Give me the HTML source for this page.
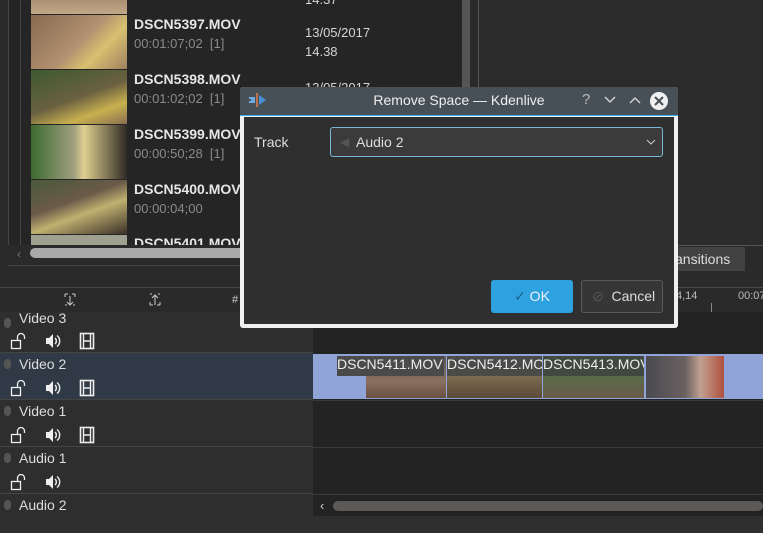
<!DOCTYPE html>
<html><head><style>
*{margin:0;padding:0;box-sizing:border-box}
body{width:763px;height:533px;background:#2a2a2a;font-family:"Liberation Sans",sans-serif;overflow:hidden;position:relative;color:#ddd}
.a{position:absolute}
.th{position:absolute;left:31px;width:96px;height:54px}
.nm{position:absolute;left:134px;font-weight:bold;font-size:14px;color:#e6e6e6}
.tc{position:absolute;left:134px;font-size:13px;color:#8a8a8a}
.dt{position:absolute;left:305px;font-size:13px;color:#d5d5d5}
.trk{position:absolute;left:0;width:313px;border-bottom:1px solid #444}
.trk .t{position:absolute;left:19px;top:3px;font-size:14px;color:#ddd}
.trk .led{position:absolute;left:4px;top:6px;width:7px;height:10px;border-radius:4px;background:#555}
.ic{position:absolute;top:26px}
</style></head><body>
<svg width="0" height="0" style="position:absolute">
<defs>
<symbol id="lk" viewBox="0 0 18 18"><rect x="1.5" y="8.5" width="9" height="8" fill="none" stroke="#eee" stroke-width="1.3"/><path d="M7.5 8.5V5a3.5 3.5 0 0 1 7 0v2" fill="none" stroke="#eee" stroke-width="1.3"/></symbol>
<symbol id="sp" viewBox="0 0 18 18"><path d="M2 6h3l4-4v14l-4-4H2z" fill="#eee"/><path d="M11 6a4 4 0 0 1 0 6M13 3.5a7 7 0 0 1 0 11" fill="none" stroke="#eee" stroke-width="1.4"/></symbol>
<symbol id="fm" viewBox="0 0 18 18"><rect x="2.5" y="1.5" width="13" height="15" fill="none" stroke="#eee" stroke-width="1.6"/><path d="M5.5 1.5v15M12.5 1.5v15M5.5 9h7" stroke="#eee" stroke-width="1.4"/></symbol>
</defs></svg>
<!-- bin panel -->
<div class="a" style="left:8px;top:0;width:462px;height:266px;border:1px solid #444;border-top:none;background:#252525"></div>
<div class="a" style="left:20px;top:0;width:1px;height:245px;background:#444"></div>
<div class="th" style="top:0;height:14px;background:linear-gradient(#a89070,#c0a888)"></div>
<div class="dt" style="top:-8px">14.37</div>
<div class="th" style="top:15px;background:linear-gradient(135deg,#8a6a50,#b09070 50%,#d8c070 70%,#a08060)"></div>
<div class="nm" style="top:16px">DSCN5397.MOV</div><div class="tc" style="top:36px">00:01:07;02&nbsp; [1]</div>
<div class="dt" style="top:25px">13/05/2017</div><div class="dt" style="top:44px">14.38</div>
<div class="th" style="top:70px;background:linear-gradient(160deg,#3d5a30,#6a6040 50%,#c8b050 75%,#8a7050)"></div>
<div class="nm" style="top:71px">DSCN5398.MOV</div><div class="tc" style="top:91px">00:01:02;02&nbsp; [1]</div>
<div class="dt" style="top:80px">13/05/2017</div>
<div class="th" style="top:125px;background:linear-gradient(90deg,#3d6a30,#a0a080 45%,#e0d090 55%,#302a25)"></div>
<div class="nm" style="top:126px">DSCN5399.MOV</div><div class="tc" style="top:146px">00:00:50;28&nbsp; [1]</div>
<div class="th" style="top:180px;background:linear-gradient(160deg,#4a5a3a,#6a5a48 40%,#c0b070 60%,#3a3028)"></div>
<div class="nm" style="top:181px">DSCN5400.MOV</div><div class="tc" style="top:201px">00:00:04;00</div>
<div class="th" style="top:235px;height:10px;background:#a0a090"></div>
<div class="nm" style="top:235px;height:10px;overflow:hidden">DSCN5401.MOV</div>
<div class="a" style="left:8px;top:245px;width:462px;height:20px;background:#2a2a2a"></div>
<div class="a" style="left:17px;top:247px;font-size:12px;color:#777">‹</div>
<div class="a" style="left:30px;top:248px;width:220px;height:10px;border-radius:5px;background:#a9a9a9"></div>
<div class="a" style="left:462px;top:0;width:8px;height:245px;background:#555"></div>
<div class="a" style="left:478px;top:0;width:285px;height:245px;border-left:1px solid #555;background:#2b2b2b"></div>
<!-- tabs -->
<div class="a" style="left:470px;top:245px;width:293px;height:1px;background:#555"></div>
<div class="a" style="left:660px;top:247px;width:85px;height:24px;background:#424242;color:#ddd;font-size:14px;padding:4px 0 0 15px">ansitions</div>
<div class="a" style="left:470px;top:287px;width:293px;height:1px;background:#4a4a4a"></div>
<div class="a" style="left:676px;top:290px;font-size:11px;color:#bbb">4,14</div>
<div class="a" style="left:738px;top:290px;font-size:11px;color:#bbb">00:07</div>
<div class="a" style="left:711px;top:303px;width:1px;height:9px;background:#888"></div>
<!-- timeline toolbar -->
<div class="a" style="left:0;top:287px;width:313px;height:1px;background:#444"></div>
<svg class="a" style="left:64px;top:293px" width="12" height="13"><path d="M1 1h3M8 1h3M1 1v3M11 1v3M6 3v9M3 9l3 3 3-3M1 12h2M9 12h2" stroke="#ccc" fill="none" stroke-width="1"/></svg>
<svg class="a" style="left:149px;top:293px" width="12" height="13"><path d="M6 12V2M3 5l3-3 3 3M1 1h2M9 1h2M1 12h3M8 12h3M1 9v3M11 9v3" stroke="#ccc" fill="none" stroke-width="1"/></svg>
<div class="a" style="left:232px;top:294px;font-size:11px;color:#ccc">#</div>
<!-- track area -->
<div class="a" style="left:313px;top:312px;width:450px;height:204px;background:#232323"></div>
<div class="trk" style="top:312px;height:41px;background:#2e2e2e"><div class="led"></div><div class="t" style="top:-2px">Video 3</div>
<svg class="ic" style="left:10px;top:20px" width="18" height="18"><use href="#lk"/></svg><svg class="ic" style="left:44px;top:20px" width="18" height="18"><use href="#sp"/></svg><svg class="ic" style="left:78px;top:20px" width="18" height="18"><use href="#fm"/></svg></div>
<div class="trk" style="top:353px;height:47px;background:#303a46"><div class="led"></div><div class="t">Video 2</div>
<svg class="ic" style="left:10px" width="18" height="18"><use href="#lk"/></svg><svg class="ic" style="left:44px" width="18" height="18"><use href="#sp"/></svg><svg class="ic" style="left:78px" width="18" height="18"><use href="#fm"/></svg></div>
<div class="trk" style="top:400px;height:47px;background:#2e2e2e"><div class="led"></div><div class="t">Video 1</div>
<svg class="ic" style="left:10px" width="18" height="18"><use href="#lk"/></svg><svg class="ic" style="left:44px" width="18" height="18"><use href="#sp"/></svg><svg class="ic" style="left:78px" width="18" height="18"><use href="#fm"/></svg></div>
<div class="trk" style="top:447px;height:47px;background:#2e2e2e"><div class="led"></div><div class="t">Audio 1</div>
<svg class="ic" style="left:10px" width="18" height="18"><use href="#lk"/></svg><svg class="ic" style="left:44px" width="18" height="18"><use href="#sp"/></svg></div>
<div class="trk" style="top:494px;height:22px;background:#2e2e2e;border:none"><div class="led"></div><div class="t">Audio 2</div></div>
<div class="a" style="left:313px;top:400px;width:450px;height:1px;background:#3a3a3a"></div>
<div class="a" style="left:313px;top:447px;width:450px;height:1px;background:#3a3a3a"></div>
<div class="a" style="left:313px;top:494px;width:450px;height:1px;background:#3a3a3a"></div>
<!-- clip -->
<div class="a" style="left:313px;top:354px;width:450px;height:45px;background:#90a4d8"></div>
<div class="a" style="left:366px;top:356px;width:80px;height:42px;background:linear-gradient(#5a5a5a,#8a7060 60%,#6a5040)"></div>
<div class="a" style="left:447px;top:356px;width:95px;height:42px;background:linear-gradient(#4a4a48,#7a6a50 50%,#5a4a38)"></div>
<div class="a" style="left:543px;top:356px;width:101px;height:42px;background:linear-gradient(#3a4a38,#5a6a48 50%,#6a5a48)"></div>
<div class="a" style="left:646px;top:356px;width:78px;height:42px;background:linear-gradient(90deg,#4a4a50,#6a6060 50%,#c0a090 70%,#b05040)"></div>
<div class="a" style="left:337px;top:356px;height:20px;width:107px;font-size:14px;color:#eee;background:#4a4a4a;white-space:nowrap;overflow:hidden">DSCN5411.MOV</div>
<div class="a" style="left:447px;top:356px;height:20px;width:95px;font-size:14px;color:#eee;background:#4a4a48;white-space:nowrap;overflow:hidden">DSCN5412.MOV</div>
<div class="a" style="left:543px;top:356px;height:20px;width:101px;font-size:14px;color:#eee;background:#404840;white-space:nowrap;overflow:hidden">DSCN5413.MOV</div>
<!-- hscroll -->
<div class="a" style="left:320px;top:498px;font-size:13px;color:#ccc">‹</div>
<div class="a" style="left:333px;top:501px;width:430px;height:10px;border-radius:5px;background:#5c5a58"></div>
<div class="a" style="left:0;top:516px;width:763px;height:17px;background:#2f2f2f"></div>
<!-- dialog -->
<div class="a" style="left:240px;top:87px;width:438px;height:241px;background:#eff0f1;border-radius:3px"></div>
<div class="a" style="left:240px;top:87px;width:438px;height:29px;background:#475057;border-bottom:1px solid #3daee9;border-radius:3px 3px 0 0"></div>
<div class="a" style="left:249px;top:93px;width:18px;height:14px"><svg width="18" height="14"><path d="M0 5h6M0 9h6M2 7h4" stroke="#6fa8dc" stroke-width="2"/><rect x="7" y="0" width="2" height="14" fill="#c0704a"/><path d="M10 2l7 5-7 5z" fill="#4a90d9"/></svg></div>
<div class="a" style="left:240px;top:92px;width:438px;text-align:center;font-size:14px;color:#eee">Remove Space — Kdenlive</div>
<div class="a" style="left:582px;top:91px;font-size:15px;color:#bbb">?</div>
<svg class="a" style="left:604px;top:96px" width="12" height="8"><path d="M1 1l5 5 5-5" stroke="#ddd" fill="none" stroke-width="1.3"/></svg>
<svg class="a" style="left:629px;top:96px" width="12" height="8"><path d="M1 7l5-5 5 5" stroke="#ddd" fill="none" stroke-width="1.3"/></svg>
<div class="a" style="left:650px;top:92px;width:18px;height:18px;border-radius:9px;background:#f0f0f0"><svg width="18" height="18"><path d="M5 5l8 8M13 5l-8 8" stroke="#475057" stroke-width="2"/></svg></div>
<div class="a" style="left:244px;top:117px;width:430px;height:207px;background:#2f2f2f"></div>
<div class="a" style="left:254px;top:134px;font-size:14px;color:#ddd">Track</div>
<div class="a" style="left:330px;top:127px;width:333px;height:30px;border:1px solid #7ab8d8;border-radius:3px;background:#3b3b3b"></div>
<div class="a" style="left:340px;top:135px;font-size:12px;color:#555">◀</div>
<div class="a" style="left:356px;top:134px;font-size:14px;color:#ddd">Audio 2</div>
<svg class="a" style="left:646px;top:139px" width="10" height="6"><path d="M1 1l4 4 4-4" stroke="#ccc" fill="none"/></svg>
<div class="a" style="left:491px;top:280px;width:82px;height:33px;background:#2ea2de;border-radius:3px;color:#eef;font-size:14px;text-align:center;line-height:33px"><span style="color:#1a5f8c">✓</span> OK</div>
<div class="a" style="left:581px;top:280px;width:82px;height:33px;background:#363636;border:1px solid #5a5a5a;border-radius:3px;color:#ddd;font-size:14px;line-height:31px;padding-left:10px"><span style="color:#555">⊘</span>&nbsp; Cancel</div>
</body></html>
